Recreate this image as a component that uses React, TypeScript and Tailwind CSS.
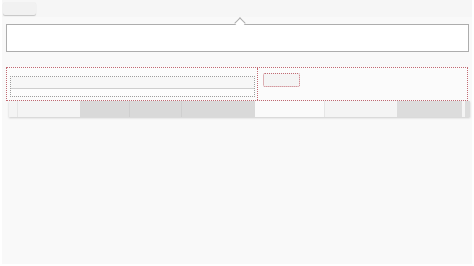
import React from "react";

function Toolbar() {
  return (
    <div className="ml-[7px] mr-[2px] flex h-[16px] items-stretch bg-[#f4f4f4] shadow-[0_1px_2px_rgba(0,0,0,0.18)]">
      <div className="w-[9px] border-r border-[#e6e6e6]" />
      <div className="w-[62px]" />
      <div className="w-[50px] border-r border-[#cfcfcf] bg-[#d9d9d9]" />
      <div className="w-[52px] border-r border-[#cfcfcf] bg-[#d9d9d9]" />
      <div className="w-[73px] bg-[#d9d9d9]" />
      <div className="w-[70px] border-r border-[#e6e6e6] bg-[#fafafa]" />
      <div className="w-[72px]" />
      <div className="w-[65px] bg-[#dcdcdc]" />
      <div className="w-[3px]" />
      <div className="flex-1 bg-[#dcdcdc]" />
    </div>
  );
}

export default function App() {
  return (
    <div className="flex h-[266px] w-[474px] flex-col bg-white font-['Liberation_Sans',sans-serif]">
      <div className="mx-[2px] flex h-[264px] flex-col bg-[#f9f9f9]">
        {/* top bar */}
        <div className="flex h-[17px] items-start bg-[#f6f6f6] px-[1px] pt-[2px]">
          <div className="h-[13px] w-[33px] rounded-[2px] bg-[#f1f1f1] shadow-[0_1px_1px_rgba(0,0,0,0.2)]" />
        </div>

        {/* input with caret */}
        <div className="relative mt-[7px] px-[4px]">
          <div className="h-[28px] w-[463px] border border-[#adadad] bg-white" />
          <div className="absolute left-[234px] top-[-5px] h-[8px] w-[8px] rotate-45 border-l border-t border-[#adadad] bg-white" />
        </div>

        {/* form row */}
        <div className="mt-[15px] px-[4px]">
          <div className="flex h-[34px] w-[462px] border border-dotted border-[#c26a73] bg-[#fbfbfb]">
            <div className="flex w-[251px] items-start border-r border-dotted border-[#c26a73] pl-[3px] pt-[8px]">
              <div className="flex h-[21px] w-[245px] flex-col border border-dotted border-[#9e9e9e]">
                <div className="h-[12px] border-b border-[#cfcfcf] bg-[#f7f7f7]" />
                <div className="flex-1 bg-[#fcfcfc]" />
              </div>
            </div>
            <div className="flex flex-1 items-start pl-[5px] pt-[5px]">
              <div className="h-[14px] w-[37px] rounded-[2px] border border-dotted border-[#c26a73] bg-[#f4f4f4]" />
            </div>
          </div>
        </div>

        <Toolbar />
      </div>
    </div>
  );
}
